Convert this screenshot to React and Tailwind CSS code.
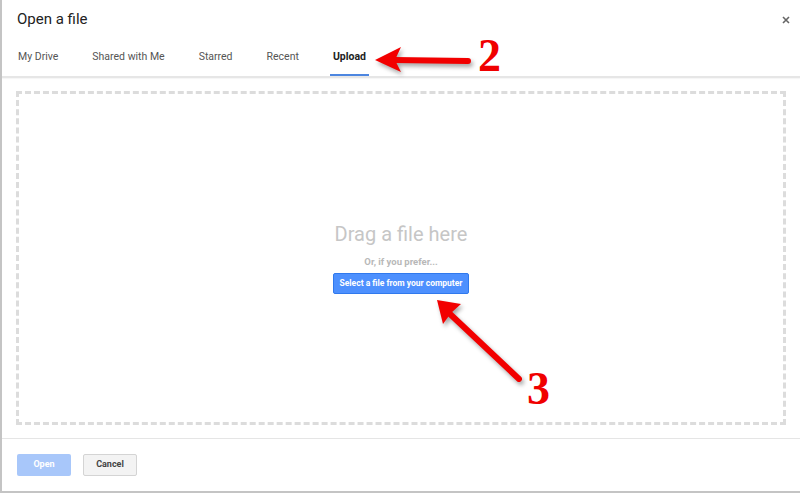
import React from 'react';

const TABS = ['My Drive', 'Shared with Me', 'Starred', 'Recent', 'Upload'];

const Tab = ({ label, active }) => (
  <div
    className={
      'h-full flex items-center pt-[2px] border-b-[2px] ' +
      (active ? 'border-[#4d86e0] text-[#222] font-bold px-[3px] -mx-[3px]' : 'border-transparent text-[#555]')
    }
  >
    {label}
  </div>
);

const Annotations = () => (
  <>
    <svg className="absolute inset-0 pointer-events-none drop-shadow-[2px_3px_2px_rgba(0,0,0,0.35)]" width="800" height="493" viewBox="0 0 800 493">
      {/* arrow to Upload tab */}
      <line x1="392" y1="60" x2="466" y2="61" stroke="#f20000" strokeWidth="6" strokeLinecap="round" />
      <polygon points="373,60 399,47 393,60 399,72" fill="#f20000" />
      {/* arrow to select button */}
      <line x1="448" y1="314" x2="517" y2="379" stroke="#f20000" strokeWidth="6" strokeLinecap="round" />
      <polygon points="435,300 459,304 449,313 441,324" fill="#f20000" />
    </svg>
    <span
      className="absolute left-[476px] top-[33px] text-[46px] leading-none font-bold text-[#f00000]"
      style={{ fontFamily: '"Liberation Serif", serif' }}
    >
      2
    </span>
    <span
      className="absolute left-[525px] top-[366px] text-[46px] leading-none font-bold text-[#f00000]"
      style={{ fontFamily: '"Liberation Serif", serif' }}
    >
      3
    </span>
  </>
);

export default function App() {
  return (
    <div
      className="relative w-[800px] h-[493px] bg-white flex flex-col border-l-[2px] border-b-[2px] border-[#c4c4c4] overflow-hidden"
      style={{ fontFamily: 'Roboto, Arial, sans-serif' }}
    >
      <div className="h-[38px] flex items-start justify-between pl-[15px] pr-[10px] pt-[9px]">
        <h1 className="text-[15px] leading-[20px] text-[#222]">Open a file</h1>
        <svg width="8" height="8" viewBox="0 0 8 8" className="mt-[7px]">
          <path d="M1 1 L7 7 M7 1 L1 7" stroke="#666" strokeWidth="1.6" />
        </svg>
      </div>

      <div className="h-[38px] flex items-stretch gap-[34px] pl-[16px] text-[10.5px]">
        {TABS.map((t) => (
          <Tab key={t} label={t} active={t === 'Upload'} />
        ))}
      </div>
      <div className="h-[2px] bg-[#e6e6e6] shadow-[0_1px_1px_rgba(0,0,0,0.04)]" />

      <div className="flex-1 flex flex-col px-[14px] pt-[13px] pb-[13px]">
        <div className="flex-1 border-[3px] border-dashed border-[#dcdcdc] flex flex-col items-center justify-center">
          <p className="text-[20px] leading-[24px] text-[#c6c6c6]">Drag a file here</p>
          <p className="mt-[10px] text-[9.5px] leading-[12px] font-bold text-[#b8b8b8]">Or, if you prefer...</p>
          <button className="mt-[5px] h-[21px] px-[6px] bg-[#4d90fe] border border-[#3079ed] rounded-[2px] text-white text-[8.5px] font-bold">
            Select a file from your computer
          </button>
        </div>
      </div>

      <div className="border-t border-[#e5e5e5] h-[53px] flex items-start gap-[12px] pl-[15px] pt-[15px]">
        <button className="w-[54px] h-[22px] rounded-[2px] bg-[#a8c7fa] text-white text-[9px] font-bold">Open</button>
        <button className="w-[54px] h-[22px] rounded-[2px] bg-[#f3f3f3] border border-[#d4d4d4] text-[#444] text-[9px] font-bold">
          Cancel
        </button>
      </div>

      <Annotations />
    </div>
  );
}
